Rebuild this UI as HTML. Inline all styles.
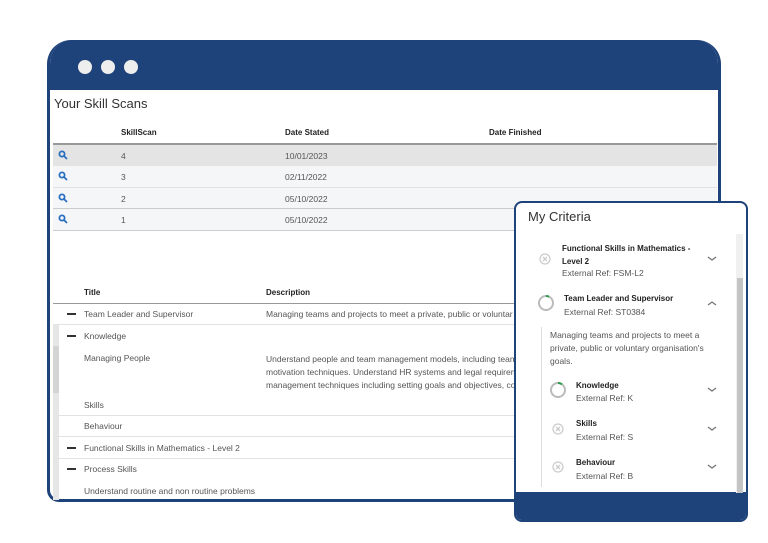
<!DOCTYPE html><html><head><style>
*{margin:0;padding:0;box-sizing:border-box}
body{width:768px;height:543px;background:#fff;position:relative;overflow:hidden;font-family:"Liberation Sans",sans-serif;color:#444}
.a{position:absolute;white-space:nowrap}
.s{font-size:8.5px;color:#555}
.b{font-size:8px;font-weight:bold;color:#222}
.ln{position:absolute;height:1px;background:#e2e2e2}
.m{position:absolute;width:9px;height:2px;background:#333}
</style></head><body>
<div class="a" style="left:47px;top:40px;width:674px;height:462px;border:3px solid #1e427a;border-top:none;border-radius:24px 24px 12px 12px;background:#fff;overflow:hidden">
 <div style="position:absolute;left:0;top:0;right:0;height:50px;background:#1e427a"></div>
 <div style="position:absolute;left:28px;top:20px;width:14px;height:14px;border-radius:50%;background:#eee"></div>
 <div style="position:absolute;left:51px;top:20px;width:14px;height:14px;border-radius:50%;background:#eee"></div>
 <div style="position:absolute;left:74px;top:20px;width:14px;height:14px;border-radius:50%;background:#eee"></div>
</div>
<div class="a" style="left:54px;top:96px;font-size:13px;color:#333">Your Skill Scans</div>
<div class="a b" style="left:121px;top:128px">SkillScan</div>
<div class="a b" style="left:285px;top:128px">Date Stated</div>
<div class="a b" style="left:489px;top:128px">Date Finished</div>
<div class="a" style="left:53px;top:143px;width:664px;height:2px;background:#999"></div>
<div class="a" style="left:53px;top:145px;width:664px;height:21px;background:#e4e4e4"></div>
<div class="a" style="left:53px;top:166px;width:664px;height:64px;background:#f5f6f8"></div>
<div class="ln" style="left:53px;top:187px;width:664px"></div>
<div class="ln" style="left:53px;top:208px;width:664px;background:#ccc"></div>
<div class="ln" style="left:53px;top:230px;width:664px;background:#ccc"></div>
<div class="a s" style="left:121px;top:151px">4</div><div class="a s" style="left:285px;top:151px">10/01/2023</div>
<div class="a s" style="left:121px;top:172px">3</div><div class="a s" style="left:285px;top:172px">02/11/2022</div>
<div class="a s" style="left:121px;top:194px">2</div><div class="a s" style="left:285px;top:194px">05/10/2022</div>
<div class="a s" style="left:121px;top:215px">1</div><div class="a s" style="left:285px;top:215px">05/10/2022</div>
<svg class="a" style="left:58px;top:150px" width="10" height="80"><g stroke="#2a6fc0" stroke-width="1.8" fill="none">
<circle cx="4" cy="4" r="2.6"/><path d="M6 6l3 3"/><circle cx="4" cy="25" r="2.6"/><path d="M6 27l3 3"/>
<circle cx="4" cy="47" r="2.6"/><path d="M6 49l3 3"/><circle cx="4" cy="68" r="2.6"/><path d="M6 70l3 3"/></g></svg>
<div class="a b" style="left:84px;top:288px">Title</div>
<div class="a b" style="left:266px;top:288px">Description</div>
<div class="ln" style="left:53px;top:303px;width:664px;background:#999"></div>
<div class="a" style="left:53px;top:324px;width:6px;height:176px;background:#e6e6e6"></div>
<div class="a" style="left:53px;top:346px;width:6px;height:47px;background:#d4d4d4"></div>
<div class="ln" style="left:53px;top:324px;width:664px"></div>
<div class="ln" style="left:59px;top:415px;width:658px"></div>
<div class="ln" style="left:53px;top:436px;width:664px"></div>
<div class="ln" style="left:53px;top:458px;width:664px"></div>
<div class="m" style="left:67px;top:313px"></div>
<div class="m" style="left:67px;top:335px"></div>
<div class="m" style="left:67px;top:447px"></div>
<div class="m" style="left:67px;top:468px"></div>
<div class="a s" style="left:84px;top:309px">Team Leader and Supervisor</div>
<div class="a s" style="left:266px;top:309px">Managing teams and projects to meet a private, public or voluntar</div>
<div class="a s" style="left:84px;top:331px">Knowledge</div>
<div class="a s" style="left:84px;top:353px">Managing People</div>
<div class="a s" style="left:266px;top:353px;line-height:13px">Understand people and team management models, including team<br>motivation techniques. Understand HR systems and legal requirem<br>management techniques including setting goals and objectives, co</div>
<div class="a s" style="left:84px;top:400px">Skills</div>
<div class="a s" style="left:84px;top:421px">Behaviour</div>
<div class="a s" style="left:84px;top:443px">Functional Skills in Mathematics - Level 2</div>
<div class="a s" style="left:84px;top:464px">Process Skills</div>
<div class="a s" style="left:84px;top:486px">Understand routine and non routine problems</div>

<div class="a" style="left:514px;top:201px;width:234px;height:321px;border:2px solid #1e427a;border-radius:8px;background:#fff;overflow:hidden">
 <div style="position:absolute;left:0;right:0;bottom:0;height:28px;background:#1e427a"></div>
 <div style="position:absolute;left:220px;top:31px;width:7px;height:259px;background:#f0f0f0"></div>
 <div style="position:absolute;left:221px;top:75px;width:6px;height:215px;background:#c4c4c4"></div>
 <div style="position:absolute;left:25px;top:124px;width:1px;height:160px;background:#ddd"></div>
</div>
<div class="a" style="left:528px;top:209px;font-size:13px;color:#333">My Criteria</div>
<svg class="a" style="left:530px;top:230px" width="200" height="260" fill="none" stroke-width="1.3">
<g stroke="#ccc"><circle cx="15" cy="29" r="5"/><path d="M13 27l4 4M17 27l-4 4"/>
<circle cx="28" cy="199" r="5"/><path d="M26 197l4 4M30 197l-4 4"/>
<circle cx="28" cy="237" r="5"/><path d="M26 235l4 4M30 235l-4 4"/></g>
<g stroke="#bbb" stroke-width="2"><circle cx="16" cy="73" r="7"/><circle cx="28" cy="160" r="7"/></g>
<g stroke="#2a9d4a" stroke-width="2"><path d="M16 66a7 7 0 0 1 3 .7"/><path d="M28 153a7 7 0 0 1 4 1.3"/></g>
<g stroke="#777"><path d="M178 27l4 3 4-3"/><path d="M178 75l4-3 4 3"/><path d="M178 158l4 3 4-3"/><path d="M178 197l4 3 4-3"/><path d="M178 235l4 3 4-3"/></g>
</svg>
<div class="a b" style="left:562px;top:242px;line-height:13px;white-space:normal;width:150px">Functional Skills in Mathematics - Level 2</div>
<div class="a s" style="left:562px;top:268px">External Ref: FSM-L2</div>
<div class="a b" style="left:564px;top:294px">Team Leader and Supervisor</div>
<div class="a s" style="left:564px;top:307px">External Ref: ST0384</div>
<div class="a s" style="left:550px;top:329px;line-height:13px">Managing teams and projects to meet a<br>private, public or voluntary organisation's<br>goals.</div>
<div class="a b" style="left:576px;top:381px">Knowledge</div><div class="a s" style="left:576px;top:393px">External Ref: K</div>
<div class="a b" style="left:576px;top:419px">Skills</div><div class="a s" style="left:576px;top:432px">External Ref: S</div>
<div class="a b" style="left:576px;top:458px">Behaviour</div><div class="a s" style="left:576px;top:471px">External Ref: B</div>
</body></html>
